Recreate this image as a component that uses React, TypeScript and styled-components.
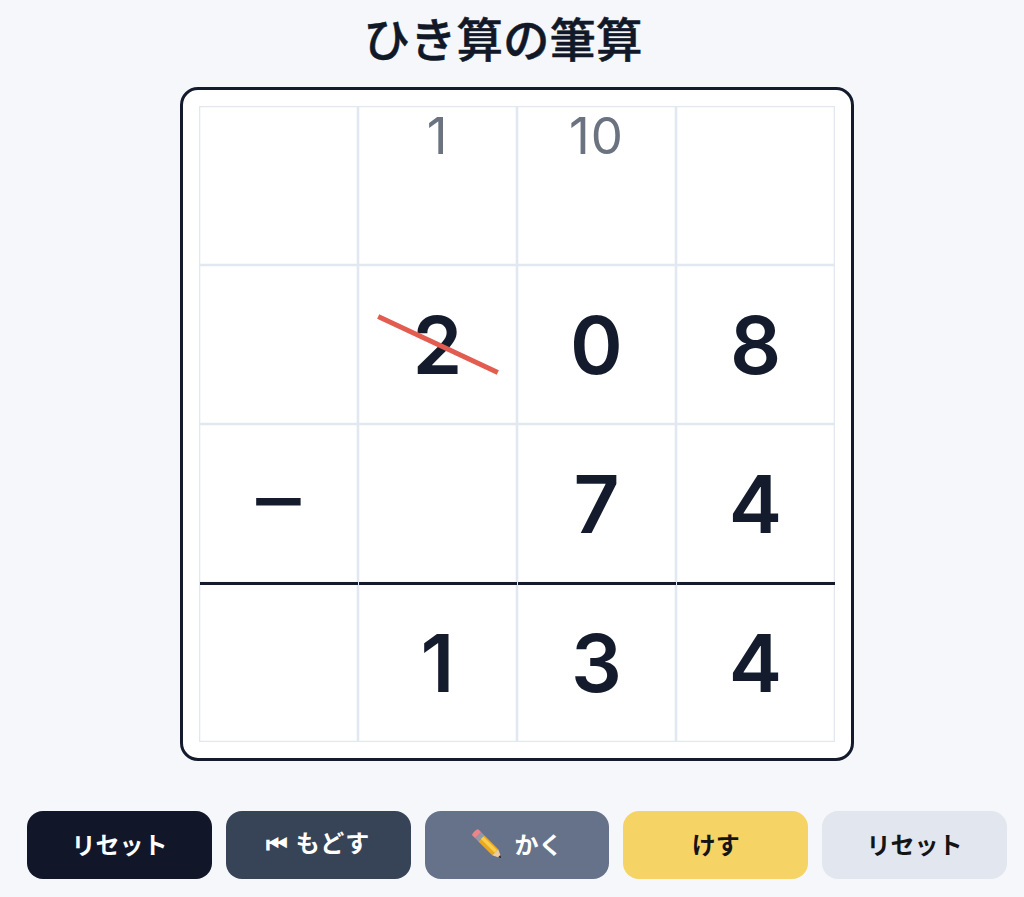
import React from "react";
import styled, {createGlobalStyle} from "styled-components";

const GlobalStyle = createGlobalStyle`
  html, body {
    margin: 0;
    padding: 0;
    background: #f5f7fb;
  }
  body {
    font-family: "Noto Sans CJK JP", "Noto Sans", sans-serif;
  }
`;

const Page = styled.div`
  display: flex;
  flex-direction: column;
  align-items: center;
  width: 1024px;
  height: 897px;
  overflow: hidden;
`;

const Title = styled.h1`
  margin: 4px 18px 0 0;
  height: 69px;
  line-height: 66px;
  font-size: 46.5px;
  font-weight: 500;
  -webkit-text-stroke: 0.5px #111827;
  color: #111827;
`;

const Board = styled.div`
  margin: 14px 0 0 10px;
  padding: 16px;
  background: #fff;
  border: 3px solid #141b2d;
  border-radius: 18px;
  display: grid;
  grid-template-columns: repeat(4, 159px);
  grid-auto-rows: 159px;
  font-family: Inter, "Noto Sans", sans-serif;
`;

const Cell = styled.div<{$rule?: boolean}>`
  position: relative;
  box-sizing: border-box;
  display: flex;
  align-items: center;
  justify-content: center;
  box-shadow: inset 0 0 0 1.3px #e2e8f0;
  color: #141b2d;
  font-size: 80px;
  font-weight: 600;
  line-height: 1;

  ${({$rule}) => $rule && `
    &::before {
      content: "";
      position: absolute;
      top: -1px;
      left: 0.5px;
      right: 0.5px;
      height: 3px;
      background: #141b2d;
    }
  `}
`;

const Borrow = styled.span`
  position: absolute;
  top: 0;
  left: 0;
  right: 0;
  text-align: center;
  font-size: 51px;
  font-weight: 400;
  letter-spacing: 1px;
  line-height: 60px;
  color: #6b7280;
`;

const Operator = styled.span`
  padding-bottom: 16px;
  font-family: "Noto Sans CJK JP", sans-serif;
  font-size: 90px;
  font-weight: 500;
`;

const Strike = styled.span`
  position: absolute;
  top: 50%;
  left: 50%;
  width: 132px;
  height: 5px;
  margin: -2.5px 0 0 -66px;
  background: #e25c50;
  transform: rotate(25deg);
`;

const Actions = styled.div`
  display: grid;
  grid-template-columns: repeat(5, 1fr);
  gap: 14px;
  width: 980px;
  margin: 50px 0 0 10px;
`;

const tones = {
  navy: {bg: "#111729", fg: "#fff"},
  slate: {bg: "#374357", fg: "#fff"},
  steel: {bg: "#65728a", fg: "#fff"},
  yellow: {bg: "#f5d364", fg: "#141414"},
  light: {bg: "#e2e7ef", fg: "#141414"},
};

const ActionButton = styled.button<{$tone: keyof typeof tones; $raised?: boolean}>`
  display: flex;
  align-items: center;
  justify-content: center;
  gap: 8px;
  height: 68px;
  border: 0;
  border-radius: 16px;
  padding: 0 0 ${({$raised}) => ($raised ? 7 : 3)}px;
  font-family: inherit;
  font-size: 24px;
  font-weight: 700;
  background: ${({$tone}) => tones[$tone].bg};
  color: ${({$tone}) => tones[$tone].fg};
`;

const BackLabel = styled.span`
  letter-spacing: 1px;
`;

const PencilIcon = styled.svg`
  margin-top: 3px;
`;

function Pencil() {
  return (
    <PencilIcon width="35" height="35" viewBox="0 0 35 35" aria-hidden="true">
      <g transform="rotate(45 17.5 17.5)">
        <path d="M-1 13.2 H3 V21.8 H-1 C-3 21.8 -3 13.2 -1 13.2 Z" fill="#e8868a"/>
        <rect x="3" y="13.2" width="4.5" height="8.6" fill="#8f9aa8"/>
        <rect x="7.5" y="13.2" width="19.5" height="8.6" fill="#e9a820"/>
        <rect x="7.5" y="14.8" width="19.5" height="3.4" fill="#f8cf4d"/>
        <path d="M27 13.2 L36 17.5 L27 21.8 Z" fill="#eccba0"/>
        <path d="M32.6 15.9 L36 17.5 L32.6 19.1 Z" fill="#2b2b2b"/>
      </g>
    </PencilIcon>
  );
}

const rows: Array<Array<string>> = [
  ["", "", "", ""],
  ["", "2", "0", "8"],
  ["−", "", "7", "4"],
  ["", "1", "3", "4"],
];
const borrows = ["", "1", "10", ""];

export default function App() {
  return (
    <Page>
      <GlobalStyle/>
      <Title>ひき算の筆算</Title>
      <Board>
        {rows.map((row, r) => row.map((digit, c) => (
          <Cell key={`${r}-${c}`} $rule={r === 3}>
            {r === 0 && borrows[c] && <Borrow>{borrows[c]}</Borrow>}
            {digit === "−" ? <Operator>{digit}</Operator> : digit}
            {r === 1 && c === 1 && <Strike/>}
          </Cell>
        )))}
      </Board>
      <Actions>
        <ActionButton $tone="navy">リセット</ActionButton>
        <ActionButton $tone="slate" $raised><BackLabel>⏮ もどす</BackLabel></ActionButton>
        <ActionButton $tone="steel"><Pencil/>かく</ActionButton>
        <ActionButton $tone="yellow">けす</ActionButton>
        <ActionButton $tone="light">リセット</ActionButton>
      </Actions>
    </Page>
  );
}
